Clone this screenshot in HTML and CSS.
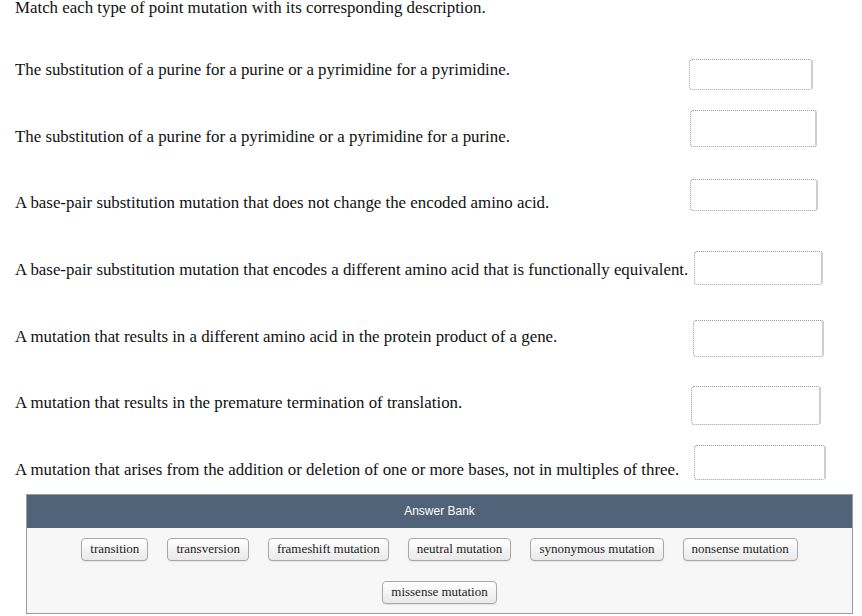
FILE: index.html
```html
<!DOCTYPE html>
<html>
<head>
<meta charset="utf-8">
<link rel="stylesheet" href="styles.css">
</head>
<body>
<div class="page">
  <p class="title">Match each type of point mutation with its corresponding description.</p>
  <div class="rows">
    <div class="row"><div class="prompt">The substitution of a purine for a purine or a pyrimidine for a pyrimidine.</div><div class="drop d1"></div></div>
    <div class="row"><div class="prompt">The substitution of a purine for a pyrimidine or a pyrimidine for a purine.</div><div class="drop d2"></div></div>
    <div class="row"><div class="prompt">A base-pair substitution mutation that does not change the encoded amino acid.</div><div class="drop d3"></div></div>
    <div class="row"><div class="prompt">A base-pair substitution mutation that encodes a different amino acid that is functionally equivalent.</div><div class="drop d4"></div></div>
    <div class="row"><div class="prompt">A mutation that results in a different amino acid in the protein product of a gene.</div><div class="drop d5"></div></div>
    <div class="row"><div class="prompt">A mutation that results in the premature termination of translation.</div><div class="drop d6"></div></div>
    <div class="row last"><div class="prompt">A mutation that arises from the addition or deletion of one or more bases, not in multiples of three.</div><div class="drop d7"></div></div>
  </div>
  <div class="bank">
    <div class="bank-head">Answer Bank</div>
    <div class="bank-body">
      <span class="chip">transition</span>
      <span class="chip">transversion</span>
      <span class="chip">frameshift mutation</span>
      <span class="chip">neutral mutation</span>
      <span class="chip">synonymous mutation</span>
      <span class="chip">nonsense mutation</span>
      <span class="chip">missense mutation</span>
    </div>
  </div>
</div>
</body>
</html>
```

FILE: styles.css
```css
html, body {
  margin: 0;
  padding: 0;
  background: #fff;
}
.page {
  font-family: "Liberation Serif", "Times New Roman", serif;
  font-size: 16.85px;
  color: #111;
  width: 862px;
  height: 616px;
  overflow: hidden;
}
.title {
  margin: -1px 0 0 15px;
  height: 41px;
  line-height: 18px;
}
.rows {
  display: flex;
  flex-direction: column;
}
.row {
  display: flex;
  align-items: flex-start;
  height: 66.667px;
  padding-left: 15px;
}
.row.last {
  height: 54px;
}
.prompt {
  flex: 0 0 674px;
  white-space: nowrap;
  line-height: 18px;
  padding-top: 21px;
}
.drop {
  box-sizing: border-box;
  border: 1px dotted #9a9a9a;
  border-right: 2px solid #cfcfcf;
  border-radius: 3px;
  background: #fff;
}
.d1 { margin-left: 0;  margin-top: 19px; width: 124px; height: 31px; }
.d2 { margin-left: 1px; margin-top: 3px;  width: 127px; height: 37px; }
.d3 { margin-left: 1px; margin-top: 6px;  width: 128px; height: 32px; }
.d4 { margin-left: 5px; margin-top: 11px; width: 129px; height: 34px; }
.d5 { margin-left: 4px; margin-top: 13px; width: 131px; height: 37px; }
.d6 { margin-left: 2px; margin-top: 13px; width: 130px; height: 39px; }
.d7 { margin-left: 5px; margin-top: 5px;  width: 132px; height: 35px; }

.bank {
  margin-left: 26px;
  width: 827px;
  box-sizing: border-box;
  border: 1px solid #9b9b9b;
  background: #f7f7f7;
}
.bank-head {
  background: #506379;
  color: #fff;
  font-family: "Liberation Sans", Arial, sans-serif;
  font-size: 12px;
  height: 33px;
  display: flex;
  align-items: center;
  justify-content: center;
}
.bank-body {
  display: flex;
  flex-wrap: wrap;
  justify-content: center;
  gap: 20px 19px;
  padding: 10px 10px 9px;
}
.chip {
  box-sizing: border-box;
  height: 23px;
  display: inline-flex;
  align-items: center;
  padding: 0 8px;
  font-size: 13px;
  color: #222;
  border: 1px solid #a9a9a9;
  border-radius: 4px;
  background: linear-gradient(#ffffff, #e9e9e9);
  box-shadow: 0 1px 1px rgba(0,0,0,0.08);
}
```
